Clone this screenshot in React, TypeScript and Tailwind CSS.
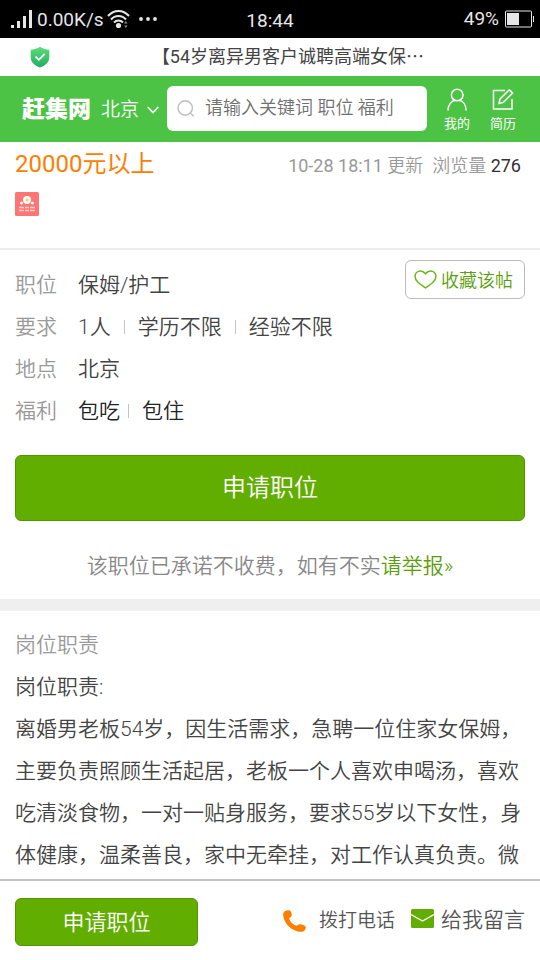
import React from 'react';

function StatusBar() {
  return (
    <div className="flex h-[38px] items-center justify-between bg-black pr-[6px] pl-[11px] text-[19px] text-[#e6e6e6]">
      <div className="flex flex-1 items-center">
        <svg className="h-[19px] w-[22px]" viewBox="0 0 22 19" fill="currentColor" aria-hidden="true">
          <rect x="0" y="15" width="3" height="3" />
          <rect x="6" y="11" width="3" height="7" />
          <rect x="12" y="6" width="3" height="12" />
          <rect x="18" y="0" width="3" height="18" />
        </svg>
        <span className="ml-1 pt-[2px]">0.00K/s</span>
        <svg className="ml-[3px] h-[20px] w-[23px]" viewBox="0 0 23 20" fill="none" stroke="currentColor" strokeWidth="2" aria-hidden="true">
          <path d="M1 7C7 0.2 16 0.2 22 7" />
          <path d="M4 10.5C8 5.8 15 5.8 19 10.5" />
          <path d="M7 13.5C9.5 10.8 13.5 10.8 16 13.5" />
          <circle cx="11.5" cy="16.5" r="2.6" fill="currentColor" stroke="none" />
          <path d="M18.8 12L17 14.5h3.6zM18.8 19L17 16.5h3.6z" fill="#8a8a8a" stroke="none" />
        </svg>
        <svg className="ml-2 h-1 w-5" viewBox="0 0 20 4" fill="currentColor" aria-hidden="true">
          <circle cx="3" cy="2" r="1.9" />
          <circle cx="10" cy="2" r="1.9" />
          <circle cx="17" cy="2" r="1.9" />
        </svg>
      </div>
      <time className="pt-1 pr-[5px]">18:44</time>
      <div className="flex flex-1 items-center justify-end">
        <span>49%</span>
        <svg className="ml-[6px] h-[18px] w-[29px]" viewBox="0 0 29 18" aria-hidden="true">
          <rect x="0.5" y="1" width="26" height="16" rx="1" fill="none" stroke="currentColor" />
          <rect x="2" y="3" width="12" height="12" fill="currentColor" />
          <rect x="28" y="6" width="1" height="6" fill="currentColor" />
        </svg>
      </div>
    </div>
  );
}

function TitleBar() {
  return (
    <div className="grid h-[38px] grid-cols-[80px_1fr_80px] items-center bg-white">
      <svg className="ml-[30px] h-[22px] w-5" viewBox="0 0 20 22" aria-hidden="true">
        <defs>
          <linearGradient id="shield" x1="0" y1="0" x2="0" y2="1">
            <stop offset="0" stopColor="#5fdc78" />
            <stop offset="1" stopColor="#1fae62" />
          </linearGradient>
        </defs>
        <path d="M10 0.8C12.5 2.6 15.5 3.6 19.3 3.8V11C19.3 16.5 15.5 19.5 10 21.5C4.5 19.5 0.7 16.5 0.7 11V3.8C4.5 3.6 7.5 2.6 10 0.8Z" fill="url(#shield)" />
        <path d="M5.6 10.6L8.8 13.8L14.6 8" fill="none" stroke="#fff" strokeWidth="1.8" />
      </svg>
      <h1 className="truncate pl-9 text-center text-lg leading-6 text-[#444]">【54岁离异男客户诚聘高端女保⋯</h1>
    </div>
  );
}

function Header() {
  return (
    <header className="flex h-[66px] items-center bg-[#4cc344] pr-6 pl-[22px] text-white">
      <a href="#home" className="pt-[2px] text-[23px] leading-8 font-black">赶集网</a>
      <button type="button" className="ml-[10px] flex items-center pt-[2px] text-[19px] leading-7 font-[350]">
        北京
        <svg className="ml-2 h-2 w-3" viewBox="0 0 12 8" fill="none" stroke="currentColor" strokeWidth="1.8" aria-hidden="true">
          <path d="M0.7 1L6 6.5L11.3 1" />
        </svg>
      </button>
      <label className="mb-[2px] ml-2 flex h-[45px] min-w-0 flex-1 items-center rounded-md bg-white pl-[10px]">
        <svg className="h-[17px] w-[18px] shrink-0" viewBox="0 0 18 17" fill="none" stroke="#bdbdbd" strokeWidth="1.4" aria-hidden="true">
          <circle cx="8.2" cy="8" r="7.2" />
          <path d="M13.4 13.2L16.8 16.3" />
        </svg>
        <input
          type="search"
          aria-label="搜索职位"
          placeholder="请输入关键词 职位 福利"
          className="ml-[10px] min-w-0 flex-1 text-lg leading-7 font-[350] text-[#333] outline-none placeholder:text-[#707070]"
        />
      </label>
      <nav className="ml-[17px] flex gap-5 pt-[2px] text-[13px] leading-[18px]">
        <a href="#me" className="flex flex-col items-center gap-1">
          <svg className="h-[23px] w-5" viewBox="0 0 20 23" fill="none" stroke="currentColor" strokeWidth="1.5" aria-hidden="true">
            <circle cx="10.2" cy="7" r="5.8" />
            <path d="M1 22.5C1 17 4.3 13 8 12.2M12.4 12.2C16.2 13 19 17 19 22.5" />
          </svg>
          我的
        </a>
        <a href="#resume" className="flex flex-col items-center gap-1">
          <svg className="h-[23px] w-[22px]" viewBox="0 0 22 23" fill="none" stroke="currentColor" strokeWidth="1.5" aria-hidden="true">
            <path d="M13 2.5H1.5V21H20V11" />
            <path d="M7 15.5L8 11L17.3 1.7L20.7 5.1L11.4 14.4Z" />
          </svg>
          简历
        </a>
      </nav>
    </header>
  );
}

function Divider() {
  return <span className="h-[14px] w-px bg-[#c4c4c4]" />;
}

function Row({ label, children }: { label: string; children: React.ReactNode }) {
  return (
    <div className="flex h-[42px] items-center">
      <dt className="w-[63px] text-[#999]">{label}</dt>
      <dd className="flex items-center text-[#444]">{children}</dd>
    </div>
  );
}

export default function App() {
  return (
    <div
      lang="zh-CN"
      className="flex min-h-screen flex-col bg-white font-[Roboto,'Noto_Sans_CJK_SC',sans-serif]"
    >
      <StatusBar />
      <TitleBar />
      <Header />
      <main className="flex-1">
        <section className="h-[108px] border-b-2 border-[#ececec] px-[15px] pt-[6px]">
          <div className="flex items-center justify-between">
            <strong className="text-2xl leading-8 font-normal text-[#ff7d00]">20000元以上</strong>
            <p className="flex gap-[9px] pt-1 pr-1 text-lg leading-7 font-[350] text-[#999]">
              <span><span className="font-normal">10-28 18:11</span> 更新</span>
              <span>浏览量 <span className="font-normal text-[#333]">276</span></span>
            </p>
          </div>
          <svg className="mt-3 h-6 w-6" viewBox="0 0 24 24" aria-hidden="true">
            <rect width="24" height="24" rx="1.5" fill="#ff7474" />
            <circle cx="12" cy="8" r="4" fill="#fff" />
            <circle cx="12" cy="8" r="1.6" fill="#ffd24d" />
            <circle cx="6.5" cy="11" r="1.5" fill="#fff" />
            <circle cx="17.5" cy="11" r="1.5" fill="#fff" />
            <path d="M4 15.5h5M10 15.5h4M15 15.5h5M4 18.5h5M10 18.5h4M15 18.5h5" stroke="#ffd0d0" strokeWidth="1.6" />
          </svg>
        </section>

        <section className="px-[15px] pt-[10px]">
          <div className="flex items-start justify-between">
            <dl className="pt-1 text-[21px] leading-[42px] font-[350]">
              <Row label="职位">保姆/护工</Row>
              <Row label="要求">
                <span className="mr-[13px]">1人</span>
                <Divider />
                <span className="mx-[13px]">学历不限</span>
                <Divider />
                <span className="ml-[13px]">经验不限</span>
              </Row>
              <Row label="地点">北京</Row>
              <Row label="福利">
                <span className="mr-2 text-[#222]">包吃</span>
                <Divider />
                <span className="ml-[13px] text-[#222]">包住</span>
              </Row>
            </dl>
            <button
              type="button"
              className="flex h-[39px] w-[120px] items-center gap-1 rounded-md border border-[#bbb] pl-2 text-lg font-[350] text-[#5a9e0a]"
            >
              <svg className="h-[19px] w-[23px]" viewBox="0 0 24 20" fill="none" stroke="#6cb81c" strokeWidth="1.6" aria-hidden="true">
                <path d="M12 4C10.5 2 8.8 1 6.7 1C3.5 1 1 3.4 1 6.7C1 11.5 5.5 14.5 12 18.8C18.5 14.5 23 11.5 23 6.7C23 3.4 20.5 1 17.3 1C15.2 1 13.5 2 12 4Z" />
              </svg>
              <span className="pt-[2px]">收藏该帖</span>
            </button>
          </div>
          <button
            type="button"
            className="mt-[23px] h-[66px] w-full rounded-md border border-[#519600] bg-[#62ae00] text-2xl font-[350] text-white"
          >
            申请职位
          </button>
          <p className="py-6 text-center text-[21px] leading-[42px] font-[350] text-[#888]">
            该职位已承诺不收费，如有不实<a href="#report" className="text-[#5a9e0a]">请举报»</a>
          </p>
        </section>

        <section className="-mt-3 border-t-[12px] border-[#efefef] px-[15px] pt-[13px] text-[21px] leading-[42px] font-[350] text-[#444]">
          <h2 className="text-[#999]">岗位职责</h2>
          <p>岗位职责:</p>
          <p>
            离婚男老板54岁，因生活需求，急聘一位住家女保姆，主要负责照顾生活起居，老板一个人喜欢申喝汤，喜欢吃清淡食物，一对一贴身服务，要求55岁以下女性，身体健康，温柔善良，家中无牵挂，对工作认真负责。微
          </p>
        </section>
      </main>

      <footer className="flex h-[81px] items-center justify-between border-t-2 border-[#c4c4c4] bg-white px-[15px] pb-[1px] font-[350] text-[#555]">
        <button
          type="button"
          className="mt-1 h-12 w-[183px] rounded-md border border-[#519600] bg-[#62ae00] text-[22px] text-white"
        >
          申请职位
        </button>
        <div className="flex items-center">
          <a href="#call" className="flex items-center pt-[2px] text-[19px] leading-7">
            <svg className="mr-[13px] h-[22px] w-[23px]" viewBox="0 0 23 22" fill="#ff7d00" aria-hidden="true">
              <path d="M1.8 1.2C3.5 0 5.8 0 7 0.6C8.4 2 9 4.3 8.6 6C8 7 6.6 7.3 6.2 8.4C7 11.7 10 14.6 13.5 15.8C14.8 15.6 15 14.4 16.3 14.2C18.3 14 21.5 15.2 22.8 16.8C23 19 21.8 21 19.5 21.8C10 22.6 0 13.5 0.2 4C0.4 2.8 0.9 1.8 1.8 1.2Z" />
            </svg>
            拨打电话
          </a>
          <a href="#message" className="ml-4 flex items-center text-[21px] leading-7">
            <svg className="mr-[7px] mb-[3px] h-[19px] w-[23px]" viewBox="0 0 23 19" aria-hidden="true">
              <rect width="23" height="19" rx="1.5" fill="#62ae00" />
              <path d="M0 5.5L11.5 12L23 5.5" fill="none" stroke="#fff" strokeWidth="1.4" />
            </svg>
            给我留言
          </a>
        </div>
      </footer>
    </div>
  );
}
